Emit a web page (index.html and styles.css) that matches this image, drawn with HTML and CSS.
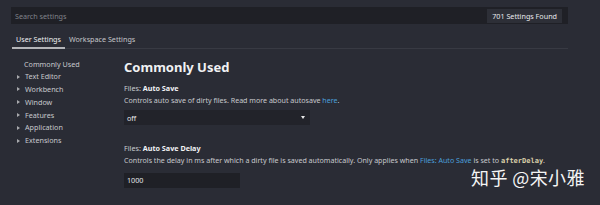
FILE: index.html
```html
<!DOCTYPE html>
<html>
<head>
<meta charset="utf-8">
<link rel="stylesheet" href="styles.css">
</head>
<body>
<div class="page">
  <div class="search">
    <span class="placeholder">Search settings</span>
    <span class="badge">701 Settings Found</span>
  </div>
  <div class="tabs">
    <span class="tab active">User Settings</span>
    <span class="tab">Workspace Settings</span>
  </div>
  <div class="main">
    <ul class="tree">
      <li class="leaf">Commonly Used</li>
      <li><span class="arrow"></span>Text Editor</li>
      <li><span class="arrow"></span>Workbench</li>
      <li><span class="arrow"></span>Window</li>
      <li><span class="arrow"></span>Features</li>
      <li><span class="arrow"></span>Application</li>
      <li><span class="arrow"></span>Extensions</li>
    </ul>
    <div class="content">
      <h1 class="heading">Commonly Used</h1>
      <div class="setting">
        <div class="title">Files: <b>Auto Save</b></div>
        <div class="desc">Controls auto save of dirty files. Read more about autosave <span class="link">here</span>.</div>
        <div class="select"><span>off</span><span class="caret"></span></div>
      </div>
      <div class="setting second">
        <div class="title">Files: <b>Auto Save Delay</b></div>
        <div class="desc">Controls the delay in ms after which a dirty file is saved automatically. Only applies when <span class="link">Files: Auto Save</span> is set to <code>afterDelay</code>.</div>
        <div class="number">1000</div>
      </div>
    </div>
  </div>
  <div class="watermark">知乎 @宋小雅</div>
</div>
</body>
</html>
```
FILE: styles.css
```css
html, body {
  margin: 0;
  padding: 0;
  background: #2a2c35;
}
.page {
  position: relative;
  width: 600px;
  height: 205px;
  overflow: hidden;
  font-family: "Noto Sans", "Open Sans", sans-serif;
  color: #cbccd0;
  font-size: 7.2px;
}
.search {
  margin: 7px 32px 0 11px;
  height: 17px;
  background: #1f2026;
  display: flex;
  align-items: center;
  justify-content: space-between;
  padding: 0 6px 0 4px;
}
.placeholder {
  color: #80828a;
  font-size: 7.2px;
}
.badge {
  background: #2d2f37;
  color: #e8e9ec;
  font-size: 7.2px;
  padding: 0 5px;
  line-height: 14px;
}
.tabs {
  display: flex;
  margin: 0 32px 0 12px;
  border-bottom: 1px solid #383a43;
  height: 24px;
}
.tab {
  box-sizing: border-box;
  height: 25px;
  margin-bottom: -1px;
  padding: 10px 4px 0;
  color: #c4c5c9;
  font-size: 7.2px;
  line-height: 11px;
}
.tab.active {
  color: #eceDef;
  border-bottom: 2px solid #b4b5b9;
}
.main {
  display: flex;
}
.tree {
  flex: none;
  list-style: none;
  margin: 0;
  padding: 8.5px 0 0 16px;
  width: 108px;
}
.tree li {
  height: 12.8px;
  line-height: 12.8px;
  display: flex;
  align-items: center;
  color: #c8c9cd;
  font-size: 7.2px;
}
.tree li.leaf {
  padding-left: 8px;
}
.arrow {
  width: 0;
  height: 0;
  border-left: 3px solid #a8a9ad;
  border-top: 2.5px solid transparent;
  border-bottom: 2.5px solid transparent;
  margin: 0 5px 0 1px;
}
.content {
  flex: 1;
  padding-top: 10px;
}
.heading {
  margin: 0;
  font-size: 13px;
  font-weight: bold;
  color: #f0f1f3;
  line-height: 17px;
}
.setting {
  margin-top: 6px;
}
.setting.second {
  margin-top: 17px;
}
.title {
  font-size: 7.2px;
  line-height: 12px;
  color: #cbccd0;
}
.title b {
  color: #f2f3f5;
}
.desc {
  font-size: 7.1px;
  line-height: 13px;
  color: #c8c9cd;
  white-space: nowrap;
}
.link {
  color: #4a9fdb;
}
code {
  font-family: "DejaVu Sans Mono", monospace;
  font-size: 7px;
  color: #d9cfa8;
  font-weight: bold;
}
.select {
  margin-top: 3px;
  width: 186px;
  height: 15px;
  background: #22232a;
  display: flex;
  align-items: center;
  justify-content: space-between;
  padding: 0 5px 0 3px;
  box-sizing: border-box;
  font-size: 7.2px;
  color: #e8e9ec;
}
.caret {
  width: 0;
  height: 0;
  border-top: 3px solid #e8e8e8;
  border-left: 2px solid transparent;
  border-right: 2px solid transparent;
}
.number {
  margin-top: 5px;
  width: 116px;
  height: 15px;
  background: #1f2026;
  font-size: 7.2px;
  line-height: 15px;
  padding-left: 3px;
  box-sizing: border-box;
  color: #e8e9ec;
}
.watermark {
  position: absolute;
  left: 471px;
  top: 164px;
  font-family: "Noto Sans CJK SC", sans-serif;
  font-size: 18px;
  color: #f4f4f4;
  letter-spacing: 0.4px;
}
```
